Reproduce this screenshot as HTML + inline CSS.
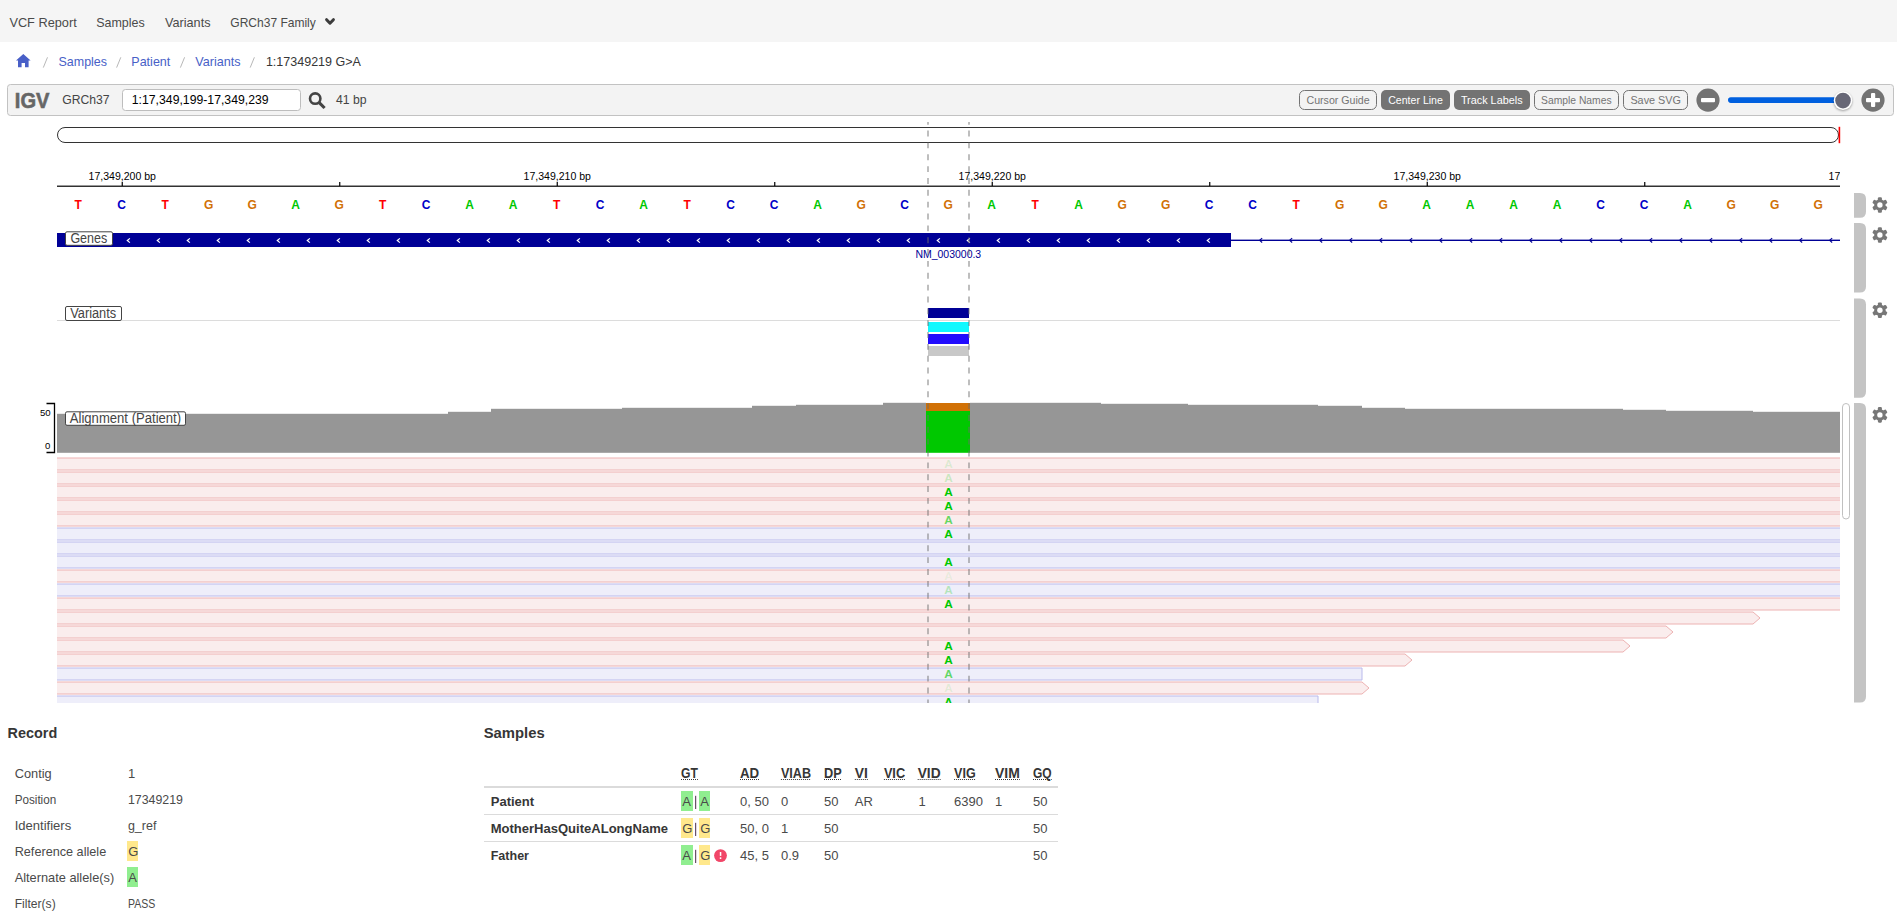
<!DOCTYPE html>
<html><head><meta charset="utf-8"><title>VCF Report</title>
<style>
html,body{margin:0;padding:0;background:#fff;}
body{width:1897px;height:919px;overflow:hidden;position:relative;}
svg{position:absolute;left:0;top:0;display:block;font-family:'Liberation Sans', sans-serif;}
</style></head><body>
<svg width="1897" height="919" viewBox="0 0 1897 919">
<rect x="0" y="0" width="1897" height="42" fill="#f5f5f5"/>
<text x="9.4" y="27" font-size="13" fill="#4a4a4a" textLength="67.3" lengthAdjust="spacingAndGlyphs">VCF Report</text>
<text x="96.2" y="27" font-size="13" fill="#4a4a4a" textLength="48.5" lengthAdjust="spacingAndGlyphs">Samples</text>
<text x="165" y="27" font-size="13" fill="#4a4a4a" textLength="45.5" lengthAdjust="spacingAndGlyphs">Variants</text>
<text x="230.3" y="27" font-size="13" fill="#4a4a4a" textLength="85.5" lengthAdjust="spacingAndGlyphs">GRCh37 Family</text>
<path d="M326.6 19.7 L330 23.2 L333.4 19.7" fill="none" stroke="#3c3c3c" stroke-width="3" stroke-linecap="round" stroke-linejoin="round"/>
<path d="M23.3 54 L16 60.6 L18 60.6 L18 67.2 L21.6 67.2 L21.6 63 L25 63 L25 67.2 L28.6 67.2 L28.6 60.6 L30.6 60.6 Z" fill="#485fc7"/>
<path d="M43.300000000000004 67.6 L47.5 57.3" stroke="#b8b8b8" stroke-width="1"/>
<text x="58.5" y="66" font-size="13" fill="#485fc7" textLength="48.5" lengthAdjust="spacingAndGlyphs">Samples</text>
<path d="M116.6 67.6 L120.8 57.3" stroke="#b8b8b8" stroke-width="1"/>
<text x="131.3" y="66" font-size="13" fill="#485fc7" textLength="39" lengthAdjust="spacingAndGlyphs">Patient</text>
<path d="M180.4 67.6 L184.60000000000002 57.3" stroke="#b8b8b8" stroke-width="1"/>
<text x="195.3" y="66" font-size="13" fill="#485fc7" textLength="45.3" lengthAdjust="spacingAndGlyphs">Variants</text>
<path d="M250.2 67.6 L254.4 57.3" stroke="#b8b8b8" stroke-width="1"/>
<text x="265.9" y="66" font-size="13" fill="#363636" textLength="95" lengthAdjust="spacingAndGlyphs">1:17349219 G&gt;A</text>
<rect x="7.5" y="84.5" width="1886" height="31" rx="3" fill="#f3f3f3" stroke="#c2c2c2"/>
<text x="14.8" y="107.6" font-size="22" fill="#666666" font-weight="bold" textLength="34.6" lengthAdjust="spacingAndGlyphs" stroke="#666666" stroke-width="0.6">IGV</text>
<text x="62.2" y="104" font-size="12.5" fill="#444444" textLength="47.4" lengthAdjust="spacingAndGlyphs">GRCh37</text>
<rect x="122.5" y="89.5" width="178" height="21" rx="3" fill="#ffffff" stroke="#bdbdbd"/>
<text x="131.8" y="104" font-size="12" fill="#000000" textLength="136.8" lengthAdjust="spacingAndGlyphs">1:17,349,199-17,349,239</text>
<circle cx="315.2" cy="98.6" r="5.2" fill="none" stroke="#444444" stroke-width="2.6"/>
<path d="M319.2 102.6 L324.6 108" stroke="#444444" stroke-width="3.1"/>
<text x="336" y="104" font-size="12.5" fill="#444444" textLength="30.6" lengthAdjust="spacingAndGlyphs">41 bp</text>
<rect x="1299.5" y="90.5" width="77" height="19" rx="5" fill="none" stroke="#737373"/>
<text x="1306.5" y="104" font-size="11" fill="#737373" textLength="63.2" lengthAdjust="spacingAndGlyphs">Cursor Guide</text>
<rect x="1381" y="90" width="69" height="20" rx="5" fill="#737373"/>
<text x="1388.2" y="104" font-size="11" fill="#ffffff" textLength="54.7" lengthAdjust="spacingAndGlyphs">Center Line</text>
<rect x="1454" y="90" width="76" height="20" rx="5" fill="#737373"/>
<text x="1460.9" y="104" font-size="11" fill="#ffffff" textLength="61.7" lengthAdjust="spacingAndGlyphs">Track Labels</text>
<rect x="1534.5" y="90.5" width="84" height="19" rx="5" fill="none" stroke="#737373"/>
<text x="1541.1" y="104" font-size="11" fill="#737373" textLength="70.5" lengthAdjust="spacingAndGlyphs">Sample Names</text>
<rect x="1623.5" y="90.5" width="64" height="19" rx="5" fill="none" stroke="#737373"/>
<text x="1630.4" y="104" font-size="11" fill="#737373" textLength="50.6" lengthAdjust="spacingAndGlyphs">Save SVG</text>
<circle cx="1708" cy="100.1" r="11.6" fill="#737373"/>
<rect x="1701" y="98" width="14" height="4.2" rx="1" fill="#ffffff"/>
<rect x="1728" y="97.3" width="110" height="5.6" rx="2.8" fill="#0060df"/>
<circle cx="1843" cy="100.6" r="9.3" fill="#ffffff" style="filter:drop-shadow(0 1px 1px rgba(0,0,0,.35))"/>
<circle cx="1843" cy="100.6" r="7.8" fill="#676776"/>
<circle cx="1873" cy="100.1" r="11.6" fill="#737373"/>
<rect x="1866" y="98" width="14" height="4.2" rx="1" fill="#ffffff"/>
<rect x="1871" y="93" width="4.2" height="14" rx="1" fill="#ffffff"/>
<rect x="57.5" y="127.5" width="1781" height="15" rx="7.5" fill="#ffffff" stroke="#333333"/>
<rect x="1838.6" y="126.8" width="1.6" height="16.4" fill="#ff0000"/>
<rect x="57" y="185.6" width="1783" height="1.2" fill="#000000"/>
<rect x="121.65" y="182" width="1.2" height="4" fill="#000000"/>
<rect x="339.15" y="182" width="1.2" height="4" fill="#000000"/>
<rect x="556.65" y="182" width="1.2" height="4" fill="#000000"/>
<rect x="774.15" y="182" width="1.2" height="4" fill="#000000"/>
<rect x="991.65" y="182" width="1.2" height="4" fill="#000000"/>
<rect x="1209.15" y="182" width="1.2" height="4" fill="#000000"/>
<rect x="1426.65" y="182" width="1.2" height="4" fill="#000000"/>
<rect x="1644.15" y="182" width="1.2" height="4" fill="#000000"/>
<clipPath id="dclip"><rect x="57" y="122" width="1783" height="581"/></clipPath>
<g clip-path="url(#dclip)">
<text x="122.25" y="180" font-size="10" fill="#000000" text-anchor="middle" textLength="67.4" lengthAdjust="spacingAndGlyphs">17,349,200 bp</text>
<text x="557.25" y="180" font-size="10" fill="#000000" text-anchor="middle" textLength="67.4" lengthAdjust="spacingAndGlyphs">17,349,210 bp</text>
<text x="992.25" y="180" font-size="10" fill="#000000" text-anchor="middle" textLength="67.4" lengthAdjust="spacingAndGlyphs">17,349,220 bp</text>
<text x="1427.25" y="180" font-size="10" fill="#000000" text-anchor="middle" textLength="67.4" lengthAdjust="spacingAndGlyphs">17,349,230 bp</text>
<text x="1862.25" y="180" font-size="10" fill="#000000" text-anchor="middle" textLength="67.4" lengthAdjust="spacingAndGlyphs">17,349,240 bp</text>
<text x="78.15" y="208.6" font-size="12" fill="rgb(255,0,0)" font-weight="bold" text-anchor="middle">T</text>
<text x="121.65" y="208.6" font-size="12" fill="rgb(0,0,200)" font-weight="bold" text-anchor="middle">C</text>
<text x="165.15" y="208.6" font-size="12" fill="rgb(255,0,0)" font-weight="bold" text-anchor="middle">T</text>
<text x="208.65" y="208.6" font-size="12" fill="rgb(209,113,5)" font-weight="bold" text-anchor="middle">G</text>
<text x="252.15" y="208.6" font-size="12" fill="rgb(209,113,5)" font-weight="bold" text-anchor="middle">G</text>
<text x="295.65" y="208.6" font-size="12" fill="rgb(0,200,0)" font-weight="bold" text-anchor="middle">A</text>
<text x="339.15" y="208.6" font-size="12" fill="rgb(209,113,5)" font-weight="bold" text-anchor="middle">G</text>
<text x="382.65" y="208.6" font-size="12" fill="rgb(255,0,0)" font-weight="bold" text-anchor="middle">T</text>
<text x="426.15" y="208.6" font-size="12" fill="rgb(0,0,200)" font-weight="bold" text-anchor="middle">C</text>
<text x="469.65" y="208.6" font-size="12" fill="rgb(0,200,0)" font-weight="bold" text-anchor="middle">A</text>
<text x="513.15" y="208.6" font-size="12" fill="rgb(0,200,0)" font-weight="bold" text-anchor="middle">A</text>
<text x="556.65" y="208.6" font-size="12" fill="rgb(255,0,0)" font-weight="bold" text-anchor="middle">T</text>
<text x="600.15" y="208.6" font-size="12" fill="rgb(0,0,200)" font-weight="bold" text-anchor="middle">C</text>
<text x="643.65" y="208.6" font-size="12" fill="rgb(0,200,0)" font-weight="bold" text-anchor="middle">A</text>
<text x="687.15" y="208.6" font-size="12" fill="rgb(255,0,0)" font-weight="bold" text-anchor="middle">T</text>
<text x="730.65" y="208.6" font-size="12" fill="rgb(0,0,200)" font-weight="bold" text-anchor="middle">C</text>
<text x="774.15" y="208.6" font-size="12" fill="rgb(0,0,200)" font-weight="bold" text-anchor="middle">C</text>
<text x="817.65" y="208.6" font-size="12" fill="rgb(0,200,0)" font-weight="bold" text-anchor="middle">A</text>
<text x="861.15" y="208.6" font-size="12" fill="rgb(209,113,5)" font-weight="bold" text-anchor="middle">G</text>
<text x="904.65" y="208.6" font-size="12" fill="rgb(0,0,200)" font-weight="bold" text-anchor="middle">C</text>
<text x="948.15" y="208.6" font-size="12" fill="rgb(209,113,5)" font-weight="bold" text-anchor="middle">G</text>
<text x="991.65" y="208.6" font-size="12" fill="rgb(0,200,0)" font-weight="bold" text-anchor="middle">A</text>
<text x="1035.15" y="208.6" font-size="12" fill="rgb(255,0,0)" font-weight="bold" text-anchor="middle">T</text>
<text x="1078.65" y="208.6" font-size="12" fill="rgb(0,200,0)" font-weight="bold" text-anchor="middle">A</text>
<text x="1122.15" y="208.6" font-size="12" fill="rgb(209,113,5)" font-weight="bold" text-anchor="middle">G</text>
<text x="1165.65" y="208.6" font-size="12" fill="rgb(209,113,5)" font-weight="bold" text-anchor="middle">G</text>
<text x="1209.15" y="208.6" font-size="12" fill="rgb(0,0,200)" font-weight="bold" text-anchor="middle">C</text>
<text x="1252.65" y="208.6" font-size="12" fill="rgb(0,0,200)" font-weight="bold" text-anchor="middle">C</text>
<text x="1296.15" y="208.6" font-size="12" fill="rgb(255,0,0)" font-weight="bold" text-anchor="middle">T</text>
<text x="1339.65" y="208.6" font-size="12" fill="rgb(209,113,5)" font-weight="bold" text-anchor="middle">G</text>
<text x="1383.15" y="208.6" font-size="12" fill="rgb(209,113,5)" font-weight="bold" text-anchor="middle">G</text>
<text x="1426.65" y="208.6" font-size="12" fill="rgb(0,200,0)" font-weight="bold" text-anchor="middle">A</text>
<text x="1470.15" y="208.6" font-size="12" fill="rgb(0,200,0)" font-weight="bold" text-anchor="middle">A</text>
<text x="1513.65" y="208.6" font-size="12" fill="rgb(0,200,0)" font-weight="bold" text-anchor="middle">A</text>
<text x="1557.15" y="208.6" font-size="12" fill="rgb(0,200,0)" font-weight="bold" text-anchor="middle">A</text>
<text x="1600.65" y="208.6" font-size="12" fill="rgb(0,0,200)" font-weight="bold" text-anchor="middle">C</text>
<text x="1644.15" y="208.6" font-size="12" fill="rgb(0,0,200)" font-weight="bold" text-anchor="middle">C</text>
<text x="1687.65" y="208.6" font-size="12" fill="rgb(0,200,0)" font-weight="bold" text-anchor="middle">A</text>
<text x="1731.15" y="208.6" font-size="12" fill="rgb(209,113,5)" font-weight="bold" text-anchor="middle">G</text>
<text x="1774.65" y="208.6" font-size="12" fill="rgb(209,113,5)" font-weight="bold" text-anchor="middle">G</text>
<text x="1818.15" y="208.6" font-size="12" fill="rgb(209,113,5)" font-weight="bold" text-anchor="middle">G</text>
<rect x="57" y="233" width="1174" height="14" fill="#000096"/>
<rect x="1231" y="239.6" width="609" height="1.4" fill="#000096"/>
<path d="M129.9 238.4 L127.3 240.5 L129.9 242.6" fill="none" stroke="#ffffff" stroke-width="1.2"/>
<path d="M159.9 238.4 L157.3 240.5 L159.9 242.6" fill="none" stroke="#ffffff" stroke-width="1.2"/>
<path d="M189.9 238.4 L187.3 240.5 L189.9 242.6" fill="none" stroke="#ffffff" stroke-width="1.2"/>
<path d="M219.9 238.4 L217.3 240.5 L219.9 242.6" fill="none" stroke="#ffffff" stroke-width="1.2"/>
<path d="M249.9 238.4 L247.3 240.5 L249.9 242.6" fill="none" stroke="#ffffff" stroke-width="1.2"/>
<path d="M279.9 238.4 L277.3 240.5 L279.9 242.6" fill="none" stroke="#ffffff" stroke-width="1.2"/>
<path d="M309.9 238.4 L307.3 240.5 L309.9 242.6" fill="none" stroke="#ffffff" stroke-width="1.2"/>
<path d="M339.9 238.4 L337.3 240.5 L339.9 242.6" fill="none" stroke="#ffffff" stroke-width="1.2"/>
<path d="M369.9 238.4 L367.3 240.5 L369.9 242.6" fill="none" stroke="#ffffff" stroke-width="1.2"/>
<path d="M399.9 238.4 L397.3 240.5 L399.9 242.6" fill="none" stroke="#ffffff" stroke-width="1.2"/>
<path d="M429.9 238.4 L427.3 240.5 L429.9 242.6" fill="none" stroke="#ffffff" stroke-width="1.2"/>
<path d="M459.9 238.4 L457.3 240.5 L459.9 242.6" fill="none" stroke="#ffffff" stroke-width="1.2"/>
<path d="M489.9 238.4 L487.3 240.5 L489.9 242.6" fill="none" stroke="#ffffff" stroke-width="1.2"/>
<path d="M519.9 238.4 L517.3 240.5 L519.9 242.6" fill="none" stroke="#ffffff" stroke-width="1.2"/>
<path d="M549.9 238.4 L547.3 240.5 L549.9 242.6" fill="none" stroke="#ffffff" stroke-width="1.2"/>
<path d="M579.9 238.4 L577.3 240.5 L579.9 242.6" fill="none" stroke="#ffffff" stroke-width="1.2"/>
<path d="M609.9 238.4 L607.3 240.5 L609.9 242.6" fill="none" stroke="#ffffff" stroke-width="1.2"/>
<path d="M639.9 238.4 L637.3 240.5 L639.9 242.6" fill="none" stroke="#ffffff" stroke-width="1.2"/>
<path d="M669.9 238.4 L667.3 240.5 L669.9 242.6" fill="none" stroke="#ffffff" stroke-width="1.2"/>
<path d="M699.9 238.4 L697.3 240.5 L699.9 242.6" fill="none" stroke="#ffffff" stroke-width="1.2"/>
<path d="M729.9 238.4 L727.3 240.5 L729.9 242.6" fill="none" stroke="#ffffff" stroke-width="1.2"/>
<path d="M759.9 238.4 L757.3 240.5 L759.9 242.6" fill="none" stroke="#ffffff" stroke-width="1.2"/>
<path d="M789.9 238.4 L787.3 240.5 L789.9 242.6" fill="none" stroke="#ffffff" stroke-width="1.2"/>
<path d="M819.9 238.4 L817.3 240.5 L819.9 242.6" fill="none" stroke="#ffffff" stroke-width="1.2"/>
<path d="M849.9 238.4 L847.3 240.5 L849.9 242.6" fill="none" stroke="#ffffff" stroke-width="1.2"/>
<path d="M879.9 238.4 L877.3 240.5 L879.9 242.6" fill="none" stroke="#ffffff" stroke-width="1.2"/>
<path d="M909.9 238.4 L907.3 240.5 L909.9 242.6" fill="none" stroke="#ffffff" stroke-width="1.2"/>
<path d="M939.9 238.4 L937.3 240.5 L939.9 242.6" fill="none" stroke="#ffffff" stroke-width="1.2"/>
<path d="M969.9 238.4 L967.3 240.5 L969.9 242.6" fill="none" stroke="#ffffff" stroke-width="1.2"/>
<path d="M999.9 238.4 L997.3 240.5 L999.9 242.6" fill="none" stroke="#ffffff" stroke-width="1.2"/>
<path d="M1029.9 238.4 L1027.3 240.5 L1029.9 242.6" fill="none" stroke="#ffffff" stroke-width="1.2"/>
<path d="M1059.9 238.4 L1057.3 240.5 L1059.9 242.6" fill="none" stroke="#ffffff" stroke-width="1.2"/>
<path d="M1089.9 238.4 L1087.3 240.5 L1089.9 242.6" fill="none" stroke="#ffffff" stroke-width="1.2"/>
<path d="M1119.9 238.4 L1117.3 240.5 L1119.9 242.6" fill="none" stroke="#ffffff" stroke-width="1.2"/>
<path d="M1149.9 238.4 L1147.3 240.5 L1149.9 242.6" fill="none" stroke="#ffffff" stroke-width="1.2"/>
<path d="M1179.9 238.4 L1177.3 240.5 L1179.9 242.6" fill="none" stroke="#ffffff" stroke-width="1.2"/>
<path d="M1209.9 238.4 L1207.3 240.5 L1209.9 242.6" fill="none" stroke="#ffffff" stroke-width="1.2"/>
<path d="M1262.1999999999998 238.1 L1259.6 240.3 L1262.1999999999998 242.5" fill="none" stroke="#000096" stroke-width="1.1"/>
<path d="M1292.1999999999998 238.1 L1289.6 240.3 L1292.1999999999998 242.5" fill="none" stroke="#000096" stroke-width="1.1"/>
<path d="M1322.1999999999998 238.1 L1319.6 240.3 L1322.1999999999998 242.5" fill="none" stroke="#000096" stroke-width="1.1"/>
<path d="M1352.1999999999998 238.1 L1349.6 240.3 L1352.1999999999998 242.5" fill="none" stroke="#000096" stroke-width="1.1"/>
<path d="M1382.1999999999998 238.1 L1379.6 240.3 L1382.1999999999998 242.5" fill="none" stroke="#000096" stroke-width="1.1"/>
<path d="M1412.1999999999998 238.1 L1409.6 240.3 L1412.1999999999998 242.5" fill="none" stroke="#000096" stroke-width="1.1"/>
<path d="M1442.1999999999998 238.1 L1439.6 240.3 L1442.1999999999998 242.5" fill="none" stroke="#000096" stroke-width="1.1"/>
<path d="M1472.1999999999998 238.1 L1469.6 240.3 L1472.1999999999998 242.5" fill="none" stroke="#000096" stroke-width="1.1"/>
<path d="M1502.1999999999998 238.1 L1499.6 240.3 L1502.1999999999998 242.5" fill="none" stroke="#000096" stroke-width="1.1"/>
<path d="M1532.1999999999998 238.1 L1529.6 240.3 L1532.1999999999998 242.5" fill="none" stroke="#000096" stroke-width="1.1"/>
<path d="M1562.1999999999998 238.1 L1559.6 240.3 L1562.1999999999998 242.5" fill="none" stroke="#000096" stroke-width="1.1"/>
<path d="M1592.1999999999998 238.1 L1589.6 240.3 L1592.1999999999998 242.5" fill="none" stroke="#000096" stroke-width="1.1"/>
<path d="M1622.1999999999998 238.1 L1619.6 240.3 L1622.1999999999998 242.5" fill="none" stroke="#000096" stroke-width="1.1"/>
<path d="M1652.1999999999998 238.1 L1649.6 240.3 L1652.1999999999998 242.5" fill="none" stroke="#000096" stroke-width="1.1"/>
<path d="M1682.1999999999998 238.1 L1679.6 240.3 L1682.1999999999998 242.5" fill="none" stroke="#000096" stroke-width="1.1"/>
<path d="M1712.1999999999998 238.1 L1709.6 240.3 L1712.1999999999998 242.5" fill="none" stroke="#000096" stroke-width="1.1"/>
<path d="M1742.1999999999998 238.1 L1739.6 240.3 L1742.1999999999998 242.5" fill="none" stroke="#000096" stroke-width="1.1"/>
<path d="M1772.1999999999998 238.1 L1769.6 240.3 L1772.1999999999998 242.5" fill="none" stroke="#000096" stroke-width="1.1"/>
<path d="M1802.1999999999998 238.1 L1799.6 240.3 L1802.1999999999998 242.5" fill="none" stroke="#000096" stroke-width="1.1"/>
<path d="M1832.1999999999998 238.1 L1829.6 240.3 L1832.1999999999998 242.5" fill="none" stroke="#000096" stroke-width="1.1"/>
<text x="948.3" y="258" font-size="10" fill="#000096" text-anchor="middle" textLength="65.8" lengthAdjust="spacingAndGlyphs">NM_003000.3</text>
<rect x="57" y="320" width="1783" height="1" fill="#dcdcdc"/>
<rect x="928" y="308" width="41" height="10" fill="#000096"/>
<rect x="928" y="322" width="41" height="10" fill="rgb(17,248,254)"/>
<rect x="928" y="334" width="41" height="10" fill="rgb(34,12,253)"/>
<rect x="928" y="346" width="41" height="10" fill="rgb(200,200,200)"/>
<rect x="57" y="413.8" width="391" height="39" fill="#969696"/>
<rect x="448" y="411.8" width="43" height="41" fill="#969696"/>
<rect x="491" y="408.8" width="131" height="44" fill="#969696"/>
<rect x="622" y="407.8" width="130" height="45" fill="#969696"/>
<rect x="752" y="405.8" width="44" height="47" fill="#969696"/>
<rect x="796" y="404.8" width="87" height="48" fill="#969696"/>
<rect x="883" y="402.8" width="43" height="50" fill="#969696"/>
<rect x="970" y="402.8" width="131" height="50" fill="#969696"/>
<rect x="1101" y="403.8" width="87" height="49" fill="#969696"/>
<rect x="1188" y="404.8" width="130" height="48" fill="#969696"/>
<rect x="1318" y="405.8" width="44" height="47" fill="#969696"/>
<rect x="1362" y="407.8" width="43" height="45" fill="#969696"/>
<rect x="1405" y="408.8" width="218" height="44" fill="#969696"/>
<rect x="1623" y="409.8" width="43" height="43" fill="#969696"/>
<rect x="1666" y="410.8" width="87" height="42" fill="#969696"/>
<rect x="1753" y="411.8" width="87" height="41" fill="#969696"/>
<rect x="926" y="403" width="44" height="8" fill="rgb(209,113,5)"/>
<rect x="926" y="411" width="44" height="41.8" fill="rgb(0,200,0)"/>
<rect x="56" y="458" width="1790" height="12" fill="rgb(250,237,237)" stroke="rgb(237,178,178)"/>
<rect x="56" y="472" width="1790" height="12" fill="rgb(250,237,237)" stroke="rgb(237,178,178)"/>
<rect x="56" y="486" width="1790" height="12" fill="rgb(250,237,237)" stroke="rgb(237,178,178)"/>
<rect x="56" y="500" width="1790" height="12" fill="rgb(250,237,237)" stroke="rgb(237,178,178)"/>
<rect x="56" y="514" width="1790" height="12" fill="rgb(250,237,237)" stroke="rgb(237,178,178)"/>
<rect x="56" y="528" width="1790" height="12" fill="rgb(238,238,250)" stroke="rgb(186,186,236)"/>
<rect x="56" y="542" width="1790" height="12" fill="rgb(238,238,250)" stroke="rgb(186,186,236)"/>
<rect x="56" y="556" width="1790" height="12" fill="rgb(238,238,250)" stroke="rgb(186,186,236)"/>
<rect x="56" y="570" width="1790" height="12" fill="rgb(250,237,237)" stroke="rgb(237,178,178)"/>
<rect x="56" y="584" width="1790" height="12" fill="rgb(238,238,250)" stroke="rgb(186,186,236)"/>
<rect x="56" y="598" width="1790" height="12" fill="rgb(250,237,237)" stroke="rgb(237,178,178)"/>
<path d="M50 612 L1753 612 L1760 618 L1753 624 L50 624 Z" fill="rgb(250,237,237)" stroke="rgb(237,178,178)"/>
<path d="M50 626 L1666 626 L1673 632 L1666 638 L50 638 Z" fill="rgb(250,237,237)" stroke="rgb(237,178,178)"/>
<path d="M50 640 L1623 640 L1630 646 L1623 652 L50 652 Z" fill="rgb(250,237,237)" stroke="rgb(237,178,178)"/>
<path d="M50 654 L1405 654 L1412 660 L1405 666 L50 666 Z" fill="rgb(250,237,237)" stroke="rgb(237,178,178)"/>
<path d="M50 668 L1362 668 L1362 680 L50 680 Z" fill="rgb(238,238,250)" stroke="rgb(186,186,236)"/>
<path d="M50 682 L1362 682 L1369 688 L1362 694 L50 694 Z" fill="rgb(250,237,237)" stroke="rgb(237,178,178)"/>
<path d="M50 696 L1318 696 L1318 708 L50 708 Z" fill="rgb(238,238,250)" stroke="rgb(186,186,236)"/>
<text x="948.4" y="467.9" font-size="11.8" fill="rgb(0,200,0)" font-weight="bold" text-anchor="middle" fill-opacity="0.12">A</text>
<text x="948.4" y="481.9" font-size="11.8" fill="rgb(0,200,0)" font-weight="bold" text-anchor="middle" fill-opacity="0.2">A</text>
<text x="948.4" y="495.9" font-size="11.8" fill="rgb(0,200,0)" font-weight="bold" text-anchor="middle" fill-opacity="1">A</text>
<text x="948.4" y="509.9" font-size="11.8" fill="rgb(0,200,0)" font-weight="bold" text-anchor="middle" fill-opacity="1">A</text>
<text x="948.4" y="523.9" font-size="11.8" fill="rgb(0,200,0)" font-weight="bold" text-anchor="middle" fill-opacity="0.6">A</text>
<text x="948.4" y="537.9" font-size="11.8" fill="rgb(0,200,0)" font-weight="bold" text-anchor="middle" fill-opacity="1">A</text>
<text x="948.4" y="565.9" font-size="11.8" fill="rgb(0,200,0)" font-weight="bold" text-anchor="middle" fill-opacity="1">A</text>
<text x="948.4" y="579.9" font-size="11.8" fill="rgb(0,200,0)" font-weight="bold" text-anchor="middle" fill-opacity="0.08">A</text>
<text x="948.4" y="593.9" font-size="11.8" fill="rgb(0,200,0)" font-weight="bold" text-anchor="middle" fill-opacity="0.25">A</text>
<text x="948.4" y="607.9" font-size="11.8" fill="rgb(0,200,0)" font-weight="bold" text-anchor="middle" fill-opacity="1">A</text>
<text x="948.4" y="649.9" font-size="11.8" fill="rgb(0,200,0)" font-weight="bold" text-anchor="middle" fill-opacity="1">A</text>
<text x="948.4" y="663.9" font-size="11.8" fill="rgb(0,200,0)" font-weight="bold" text-anchor="middle" fill-opacity="1">A</text>
<text x="948.4" y="677.9" font-size="11.8" fill="rgb(0,200,0)" font-weight="bold" text-anchor="middle" fill-opacity="0.6">A</text>
<text x="948.4" y="691.9" font-size="11.8" fill="rgb(0,200,0)" font-weight="bold" text-anchor="middle" fill-opacity="0.1">A</text>
<text x="948.4" y="705.9" font-size="11.8" fill="rgb(0,200,0)" font-weight="bold" text-anchor="middle" fill-opacity="1">A</text>
<line x1="928" y1="118.75" x2="928" y2="703.5" stroke="rgb(110,110,110)" stroke-opacity="0.52" stroke-width="1.7" stroke-dasharray="5.9 5.95"/>
<line x1="969" y1="118.75" x2="969" y2="703.5" stroke="rgb(110,110,110)" stroke-opacity="0.52" stroke-width="1.7" stroke-dasharray="5.9 5.95"/>
</g>
<rect x="65.5" y="231.8" width="47" height="13.5" rx="1.5" fill="#ffffff" stroke="#444444"/>
<text x="70.4" y="242.9" font-size="14" fill="#444444" textLength="36.8" lengthAdjust="spacingAndGlyphs">Genes</text>
<rect x="65.5" y="306.5" width="56" height="14" rx="1.5" fill="#ffffff" stroke="#444444"/>
<text x="70.2" y="318" font-size="14" fill="#444444" textLength="46" lengthAdjust="spacingAndGlyphs">Variants</text>
<rect x="65.5" y="411.8" width="120" height="13.5" rx="1.5" fill="#ffffff" stroke="#444444"/>
<text x="69.8" y="423" font-size="14" fill="#444444" textLength="111.3" lengthAdjust="spacingAndGlyphs">Alignment (Patient)</text>
<path d="M46.5 403.5 L54.5 403.5 L54.5 452.5 L46.5 452.5" fill="none" stroke="#000000" stroke-width="1.3"/>
<text x="50.6" y="416.4" font-size="9.6" fill="#000000" text-anchor="end">50</text>
<text x="50.3" y="449.3" font-size="9.6" fill="#000000" text-anchor="end">0</text>
<path d="M1854 193 L1860 193 Q1866 193 1866 199 L1866 211.7 Q1866 217.7 1860 217.7 L1854 217.7 Z" fill="#c4c4c4"/>
<path d="M1854 223.1 L1860 223.1 Q1866 223.1 1866 229.1 L1866 286.6 Q1866 292.6 1860 292.6 L1854 292.6 Z" fill="#c4c4c4"/>
<path d="M1854 298.5 L1860 298.5 Q1866 298.5 1866 304.5 L1866 391.7 Q1866 397.7 1860 397.7 L1854 397.7 Z" fill="#c4c4c4"/>
<path d="M1854 403.1 L1860 403.1 Q1866 403.1 1866 409.1 L1866 696.4 Q1866 702.4 1860 702.4 L1854 702.4 Z" fill="#c4c4c4"/>
<rect x="1842.5" y="403.5" width="7" height="115.5" rx="3.5" fill="#ffffff" stroke="#c0c0c0"/>
<g fill="#777777"><circle cx="1879.9" cy="205" r="5.7"/><rect x="1877.9" y="197.2" width="4" height="15.6" rx="1.1" transform="rotate(0 1879.9 205)"/><rect x="1877.9" y="197.2" width="4" height="15.6" rx="1.1" transform="rotate(60 1879.9 205)"/><rect x="1877.9" y="197.2" width="4" height="15.6" rx="1.1" transform="rotate(120 1879.9 205)"/><circle cx="1879.9" cy="205" r="2.7" fill="#ffffff"/></g>
<g fill="#777777"><circle cx="1879.9" cy="235" r="5.7"/><rect x="1877.9" y="227.2" width="4" height="15.6" rx="1.1" transform="rotate(0 1879.9 235)"/><rect x="1877.9" y="227.2" width="4" height="15.6" rx="1.1" transform="rotate(60 1879.9 235)"/><rect x="1877.9" y="227.2" width="4" height="15.6" rx="1.1" transform="rotate(120 1879.9 235)"/><circle cx="1879.9" cy="235" r="2.7" fill="#ffffff"/></g>
<g fill="#777777"><circle cx="1879.9" cy="310.2" r="5.7"/><rect x="1877.9" y="302.4" width="4" height="15.6" rx="1.1" transform="rotate(0 1879.9 310.2)"/><rect x="1877.9" y="302.4" width="4" height="15.6" rx="1.1" transform="rotate(60 1879.9 310.2)"/><rect x="1877.9" y="302.4" width="4" height="15.6" rx="1.1" transform="rotate(120 1879.9 310.2)"/><circle cx="1879.9" cy="310.2" r="2.7" fill="#ffffff"/></g>
<g fill="#777777"><circle cx="1879.9" cy="414.9" r="5.7"/><rect x="1877.9" y="407.09999999999997" width="4" height="15.6" rx="1.1" transform="rotate(0 1879.9 414.9)"/><rect x="1877.9" y="407.09999999999997" width="4" height="15.6" rx="1.1" transform="rotate(60 1879.9 414.9)"/><rect x="1877.9" y="407.09999999999997" width="4" height="15.6" rx="1.1" transform="rotate(120 1879.9 414.9)"/><circle cx="1879.9" cy="414.9" r="2.7" fill="#ffffff"/></g>
<text x="7.6" y="738" font-size="15.5" fill="#363636" font-weight="bold" textLength="49.7" lengthAdjust="spacingAndGlyphs">Record</text>
<text x="14.7" y="778" font-size="13" fill="#4a4a4a" textLength="37" lengthAdjust="spacingAndGlyphs">Contig</text>
<text x="127.9" y="778" font-size="13" fill="#4a4a4a">1</text>
<text x="14.7" y="804" font-size="13" fill="#4a4a4a" textLength="41.5" lengthAdjust="spacingAndGlyphs">Position</text>
<text x="127.9" y="804" font-size="13" fill="#4a4a4a" textLength="55" lengthAdjust="spacingAndGlyphs">17349219</text>
<text x="14.7" y="830" font-size="13" fill="#4a4a4a" textLength="56.5" lengthAdjust="spacingAndGlyphs">Identifiers</text>
<text x="127.9" y="830" font-size="13" fill="#4a4a4a" textLength="28.5" lengthAdjust="spacingAndGlyphs">g_ref</text>
<text x="14.7" y="856" font-size="13" fill="#4a4a4a" textLength="91.5" lengthAdjust="spacingAndGlyphs">Reference allele</text>
<rect x="127" y="841" width="11" height="20" fill="#ffe88c"/>
<text x="128.2" y="856" font-size="13" fill="#4a4a4a">G</text>
<text x="14.7" y="882" font-size="13" fill="#4a4a4a" textLength="99.5" lengthAdjust="spacingAndGlyphs">Alternate allele(s)</text>
<rect x="127" y="867" width="11" height="20" fill="#90ee90"/>
<text x="128.2" y="882" font-size="13" fill="#4a4a4a">A</text>
<text x="14.7" y="908" font-size="13" fill="#4a4a4a" textLength="41" lengthAdjust="spacingAndGlyphs">Filter(s)</text>
<text x="127.9" y="908" font-size="13" fill="#4a4a4a" textLength="27.3" lengthAdjust="spacingAndGlyphs">PASS</text>
<text x="483.7" y="738" font-size="15.5" fill="#363636" font-weight="bold" textLength="61" lengthAdjust="spacingAndGlyphs">Samples</text>
<text x="681" y="777.8" font-size="13.8" fill="#363636" font-weight="bold" textLength="16.9" lengthAdjust="spacingAndGlyphs">GT</text>
<line x1="681" y1="779.5" x2="697.9" y2="779.5" stroke="#363636" stroke-width="1" stroke-dasharray="1 1"/>
<text x="740" y="777.8" font-size="13.8" fill="#363636" font-weight="bold" textLength="19.2" lengthAdjust="spacingAndGlyphs">AD</text>
<line x1="740" y1="779.5" x2="759.2" y2="779.5" stroke="#363636" stroke-width="1" stroke-dasharray="1 1"/>
<text x="780.9" y="777.8" font-size="13.8" fill="#363636" font-weight="bold" textLength="30.1" lengthAdjust="spacingAndGlyphs">VIAB</text>
<line x1="780.9" y1="779.5" x2="811.0" y2="779.5" stroke="#363636" stroke-width="1" stroke-dasharray="1 1"/>
<text x="824" y="777.8" font-size="13.8" fill="#363636" font-weight="bold" textLength="17.7" lengthAdjust="spacingAndGlyphs">DP</text>
<line x1="824" y1="779.5" x2="841.7" y2="779.5" stroke="#363636" stroke-width="1" stroke-dasharray="1 1"/>
<text x="854.8" y="777.8" font-size="13.8" fill="#363636" font-weight="bold" textLength="13.1" lengthAdjust="spacingAndGlyphs">VI</text>
<line x1="854.8" y1="779.5" x2="867.9" y2="779.5" stroke="#363636" stroke-width="1" stroke-dasharray="1 1"/>
<text x="883.9" y="777.8" font-size="13.8" fill="#363636" font-weight="bold" textLength="21.2" lengthAdjust="spacingAndGlyphs">VIC</text>
<line x1="883.9" y1="779.5" x2="905.1" y2="779.5" stroke="#363636" stroke-width="1" stroke-dasharray="1 1"/>
<text x="917.7" y="777.8" font-size="13.8" fill="#363636" font-weight="bold" textLength="22.9" lengthAdjust="spacingAndGlyphs">VID</text>
<line x1="917.7" y1="779.5" x2="940.6" y2="779.5" stroke="#363636" stroke-width="1" stroke-dasharray="1 1"/>
<text x="954.1" y="777.8" font-size="13.8" fill="#363636" font-weight="bold" textLength="21.6" lengthAdjust="spacingAndGlyphs">VIG</text>
<line x1="954.1" y1="779.5" x2="975.7" y2="779.5" stroke="#363636" stroke-width="1" stroke-dasharray="1 1"/>
<text x="995" y="777.8" font-size="13.8" fill="#363636" font-weight="bold" textLength="24.8" lengthAdjust="spacingAndGlyphs">VIM</text>
<line x1="995" y1="779.5" x2="1019.8" y2="779.5" stroke="#363636" stroke-width="1" stroke-dasharray="1 1"/>
<text x="1033" y="777.8" font-size="13.8" fill="#363636" font-weight="bold" textLength="18.7" lengthAdjust="spacingAndGlyphs">GQ</text>
<line x1="1033" y1="779.5" x2="1051.7" y2="779.5" stroke="#363636" stroke-width="1" stroke-dasharray="1 1"/>
<rect x="484" y="786" width="574" height="2" fill="#dbdbdb"/>
<rect x="484" y="814" width="574" height="1" fill="#dbdbdb"/>
<rect x="484" y="841" width="574" height="1" fill="#dbdbdb"/>
<text x="490.7" y="806" font-size="13" fill="#363636" font-weight="bold" textLength="43.5" lengthAdjust="spacingAndGlyphs">Patient</text>
<rect x="681" y="791" width="12" height="20" fill="#90ee90"/>
<text x="682.3" y="806" font-size="13" fill="#4a4a4a">A</text>
<rect x="699" y="791" width="11" height="20" fill="#90ee90"/>
<text x="700.3" y="806" font-size="13" fill="#4a4a4a">A</text>
<rect x="695.1" y="795.8" width="1.1" height="13.2" fill="#5a3f5a"/>
<text x="740" y="806" font-size="13" fill="#4a4a4a">0, 50</text>
<text x="781" y="806" font-size="13" fill="#4a4a4a">0</text>
<text x="824" y="806" font-size="13" fill="#4a4a4a">50</text>
<text x="854.8" y="806" font-size="13" fill="#4a4a4a">AR</text>
<text x="918.5" y="806" font-size="13" fill="#4a4a4a">1</text>
<text x="954" y="806" font-size="13" fill="#4a4a4a">6390</text>
<text x="995" y="806" font-size="13" fill="#4a4a4a">1</text>
<text x="1033" y="806" font-size="13" fill="#4a4a4a">50</text>
<text x="490.7" y="833" font-size="13" fill="#363636" font-weight="bold" textLength="177.3" lengthAdjust="spacingAndGlyphs">MotherHasQuiteALongName</text>
<rect x="681" y="818" width="12" height="20" fill="#ffe88c"/>
<text x="682.3" y="833" font-size="13" fill="#4a4a4a">G</text>
<rect x="699" y="818" width="11" height="20" fill="#ffe88c"/>
<text x="700.3" y="833" font-size="13" fill="#4a4a4a">G</text>
<rect x="695.1" y="822.8" width="1.1" height="13.2" fill="#5a3f5a"/>
<text x="740" y="833" font-size="13" fill="#4a4a4a">50, 0</text>
<text x="781" y="833" font-size="13" fill="#4a4a4a">1</text>
<text x="824" y="833" font-size="13" fill="#4a4a4a">50</text>
<text x="1033" y="833" font-size="13" fill="#4a4a4a">50</text>
<text x="490.7" y="860" font-size="13" fill="#363636" font-weight="bold" textLength="38.3" lengthAdjust="spacingAndGlyphs">Father</text>
<rect x="681" y="845" width="12" height="20" fill="#90ee90"/>
<text x="682.3" y="860" font-size="13" fill="#4a4a4a">A</text>
<rect x="699" y="845" width="11" height="20" fill="#ffe88c"/>
<text x="700.3" y="860" font-size="13" fill="#4a4a4a">G</text>
<rect x="695.1" y="849.8" width="1.1" height="13.2" fill="#5a3f5a"/>
<circle cx="720.5" cy="855.6" r="6.4" fill="#f14668"/>
<rect x="719.8" y="852" width="1.5" height="3.9" fill="#fff"/>
<rect x="719.8" y="857.3" width="1.5" height="1.7" fill="#fff"/>
<text x="740" y="860" font-size="13" fill="#4a4a4a">45, 5</text>
<text x="781" y="860" font-size="13" fill="#4a4a4a">0.9</text>
<text x="824" y="860" font-size="13" fill="#4a4a4a">50</text>
<text x="1033" y="860" font-size="13" fill="#4a4a4a">50</text>
</svg>
</body></html>
